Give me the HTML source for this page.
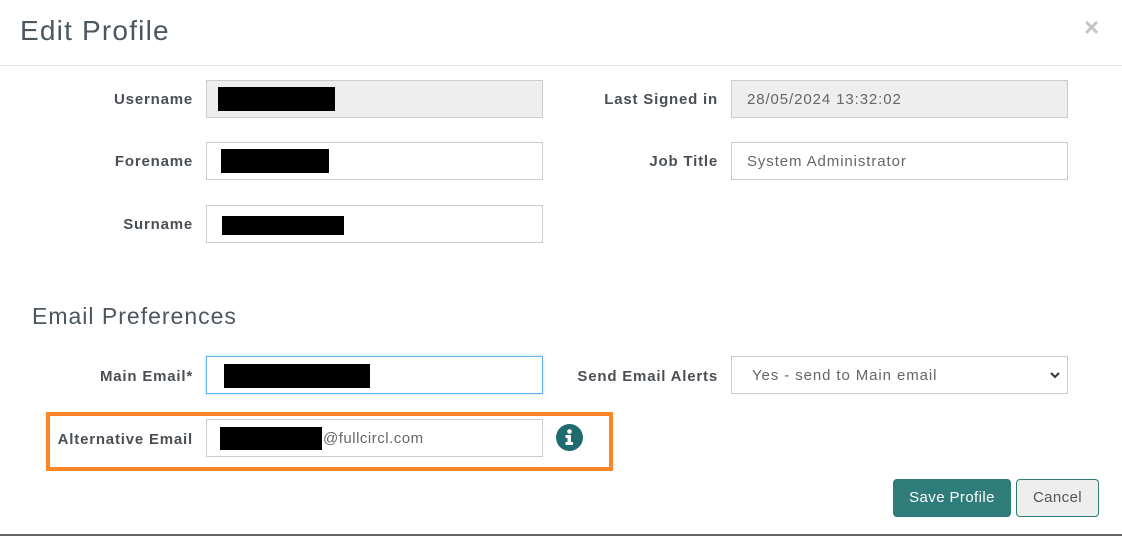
<!DOCTYPE html>
<html><head><style>
body{margin:0;width:1122px;height:536px;background:#fff;position:relative;overflow:hidden;font-family:"Liberation Sans",sans-serif;color:#4a4f55}
.a{position:absolute}
.lbl{position:absolute;font-weight:bold;font-size:15px;color:#4a4f55;text-align:right;letter-spacing:0.8px}
.in{position:absolute;box-sizing:border-box;border:1px solid #ccc;background:#fff;height:38px;width:337px;font-size:15px;color:#666;padding-left:15px;line-height:38px;letter-spacing:0.9px}
.blk{position:absolute;background:#000}
</style></head><body>
<div class="a" style="left:20px;top:15px;font-size:28px;color:#4c5660;letter-spacing:1.2px">Edit Profile</div>
<div class="a" style="left:1084px;top:12px;font-size:26px;font-weight:bold;color:#c4c4c4">×</div>
<div class="a" style="left:0;top:65px;width:1122px;height:1px;background:#e5e5e5"></div>

<div class="lbl" style="right:929px;top:91px">Username</div>
<div class="in" style="left:206px;top:80px;background:#eee"></div>
<div class="blk" style="left:218px;top:87px;width:117px;height:24px"></div>

<div class="lbl" style="right:929px;top:153px">Forename</div>
<div class="in" style="left:206px;top:142px"></div>
<div class="blk" style="left:221px;top:149px;width:108px;height:24px"></div>

<div class="lbl" style="right:929px;top:216px">Surname</div>
<div class="in" style="left:206px;top:205px"></div>
<div class="blk" style="left:222px;top:216px;width:122px;height:19px"></div>

<div class="lbl" style="right:404px;top:91px">Last Signed in</div>
<div class="in" style="left:731px;top:80px;background:#eee">28/05/2024 13:32:02</div>

<div class="lbl" style="right:404px;top:153px">Job Title</div>
<div class="in" style="left:731px;top:142px">System Administrator</div>

<div class="a" style="left:32px;top:303px;font-size:23px;color:#4c5660;letter-spacing:1px">Email Preferences</div>

<div class="lbl" style="right:929px;top:368px">Main Email*</div>
<div class="in" style="left:206px;top:356px;border-color:#66afe9;box-shadow:0 0 3px rgba(102,175,233,.5)"></div>
<div class="blk" style="left:224px;top:364px;width:146px;height:24px"></div>

<div class="lbl" style="right:404px;top:368px">Send Email Alerts</div>
<div class="in" style="left:731px;top:356px;padding-left:20px">Yes - send to Main email</div>
<div class="a" style="left:1046px;top:368px;width:14px;height:14px;background:#fff"></div>
<svg class="a" style="left:1049px;top:370px" width="12" height="10" viewBox="0 0 12 10"><path d="M2 3l4 4 4-4" stroke="#333" stroke-width="2" fill="none"/></svg>

<div class="a" style="left:46px;top:412px;width:567px;height:59px;box-sizing:border-box;border:4px solid #ff8527"></div>
<div class="lbl" style="right:929px;top:431px">Alternative Email</div>
<div class="in" style="left:206px;top:419px;padding-left:116px;letter-spacing:0.5px">@fullcircl.com</div>
<div class="blk" style="left:220px;top:427px;width:102px;height:23px"></div>
<svg class="a" style="left:556px;top:424px" width="27" height="27" viewBox="0 0 27 27"><circle cx="13.5" cy="13.5" r="13.5" fill="#1f6b6e"/><circle cx="13.5" cy="7.5" r="2.3" fill="#fff"/><path d="M9.5 11h5.5v7h2v3h-7.5v-3h2v-4h-2z" fill="#fff"/></svg>

<div class="a" style="left:893px;top:479px;width:118px;height:38px;background:#2e7d7b;border-radius:4px;color:#fff;font-size:15px;text-align:center;line-height:38px;letter-spacing:0.4px">Save Profile</div>
<div class="a" style="left:1016px;top:479px;width:83px;height:38px;box-sizing:border-box;background:#eee;border:1px solid #2e7d7b;border-radius:4px;color:#555;font-size:15px;text-align:center;line-height:36px;letter-spacing:0.4px">Cancel</div>
<div class="a" style="left:0;top:534px;width:1122px;height:2px;background:#666"></div>
</body></html>
